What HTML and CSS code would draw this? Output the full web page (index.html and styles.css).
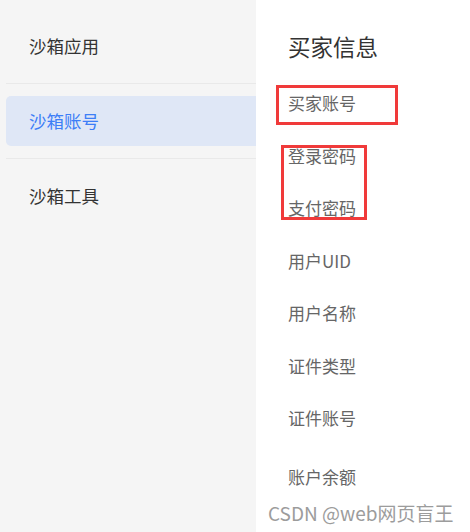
FILE: index.html
```html
<!DOCTYPE html>
<html lang="zh-CN">
<head>
    <meta charset="UTF-8">
    <title>沙箱账号</title>
    <link rel="stylesheet" href="styles.css">
</head>
<body>

    <div class="page">
        <!-- Sidebar -->
        <div class="sidebar">
            <div class="menu-item">沙箱应用</div>
            <div class="divider"></div>
            <div class="menu-item active">沙箱账号</div>
            <div class="divider"></div>
            <div class="menu-item">沙箱工具</div>
        </div>

        <!-- Buyer info -->
        <div class="content">
            <div class="title">买家信息</div>
            <div class="info-list">
                <div class="info-row">买家账号</div>
                <div class="info-row">登录密码</div>
                <div class="info-row">支付密码</div>
                <div class="info-row">用户UID</div>
                <div class="info-row">用户名称</div>
                <div class="info-row">证件类型</div>
                <div class="info-row">证件账号</div>
                <div class="info-row last">账户余额</div>
            </div>

            <!-- annotations -->
            <div class="mark mark-account"></div>
            <div class="mark mark-password"></div>
        </div>
    </div>

    <div class="watermark">CSDN @web网页盲王</div>

</body>
</html>
```

FILE: styles.css
```css
* {
    margin: 0;
    padding: 0;
    box-sizing: border-box;
    font-family: "Noto Sans CJK SC", "Liberation Sans", sans-serif;
}
body {
    background-color: #ffffff;
    width: 470px;
    height: 532px;
    overflow: hidden;
    position: relative;
}
.page {
    display: flex;
    height: 532px;
}
.sidebar {
    width: 256px;
    background-color: #f5f5f5;
    padding: 21px 0 0 6px;
    display: flex;
    flex-direction: column;
    gap: 12px;
}
.menu-item {
    height: 50px;
    line-height: 50px;
    padding-left: 23px;
    font-size: 17.5px;
    color: #333333;
    border-radius: 5px;
}
.menu-item.active {
    background-color: #dfe7f6;
    color: #3d7ef7;
    border-top-right-radius: 0;
    border-bottom-right-radius: 0;
}
.divider {
    height: 1px;
    background-color: #e9e9e9;
}
.content {
    flex: 1;
    position: relative;
    padding: 20px 0 0 32px;
}
.title {
    font-size: 22.5px;
    line-height: 52px;
    color: #333333;
}
.info-list {
    margin-top: 5px;
}
.info-row {
    height: 52.5px;
    line-height: 52.5px;
    font-size: 17px;
    color: #666666;
}
.info-row.last {
    margin-top: 6.5px;
}
.mark {
    position: absolute;
    border: 3px solid #f03a3a;
}
.mark-account {
    left: 20px;
    top: 85px;
    width: 122px;
    height: 40px;
}
.mark-password {
    left: 25px;
    top: 145px;
    width: 86px;
    height: 75px;
}
.watermark {
    position: absolute;
    left: 268px;
    top: 499px;
    font-size: 19px;
    line-height: 28px;
    color: #9c9c9c;
}
```
